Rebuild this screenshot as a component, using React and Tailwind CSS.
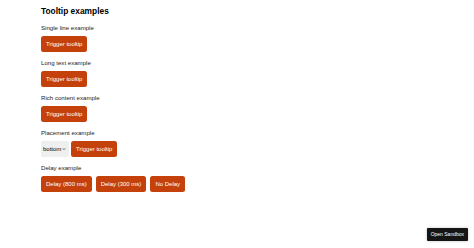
import React from 'react';

const btn =
  'h-[16px] px-[5px] rounded-[2.5px] bg-[#c4410c] text-white text-[6px] leading-[16px] whitespace-nowrap';

function Section({ label, children, last }) {
  return (
    <div className={last ? '' : 'mb-[6px]'}>
      <p className="text-[6.1px] leading-[10px] text-[#222]">{label}</p>
      <div className="mt-[3px] flex items-center gap-[2px]">{children}</div>
    </div>
  );
}

export default function App() {
  return (
    <div
      className="relative w-[474px] h-[248px] bg-white pl-[41px] pt-[6px]"
      style={{ fontFamily: "'Liberation Sans', Arial, sans-serif" }}
    >
      <h3 className="text-[8.4px] font-bold leading-[11px] text-black mb-[6px]">Tooltip examples</h3>

      <Section label="Single line example">
        <button className={btn}>Trigger tooltip</button>
      </Section>

      <Section label="Long text example">
        <button className={btn}>Trigger tooltip</button>
      </Section>

      <Section label="Rich content example">
        <button className={btn}>Trigger tooltip</button>
      </Section>

      <Section label="Placement example">
        <div className="h-[16px] w-[28px] bg-[#efefef] rounded-[2px] flex items-center pl-[2px] gap-[1px] text-[6px] text-black">
          <span>bottom</span>
          <svg viewBox="0 0 10 10" className="w-[4px] h-[4px]">
            <path d="M2 3.5 L5 6.5 L8 3.5" fill="none" stroke="#222" strokeWidth="1.8" />
          </svg>
        </div>
        <button className={btn}>Trigger tooltip</button>
      </Section>

      <Section label="Delay example" last>
        <div className="flex gap-[4px]">
          <button className={btn}>Delay (800 ms)</button>
          <button className={btn}>Delay (300 ms)</button>
          <button className={btn}>No Delay</button>
        </div>
      </Section>

      <button className="absolute right-[6px] bottom-[7px] h-[13px] px-[4px] bg-[#151515] text-white text-[5px] leading-[13px] rounded-[1px] shadow-[0_0_3px_rgba(0,0,0,0.25)]">
        Open Sandbox
      </button>
    </div>
  );
}
